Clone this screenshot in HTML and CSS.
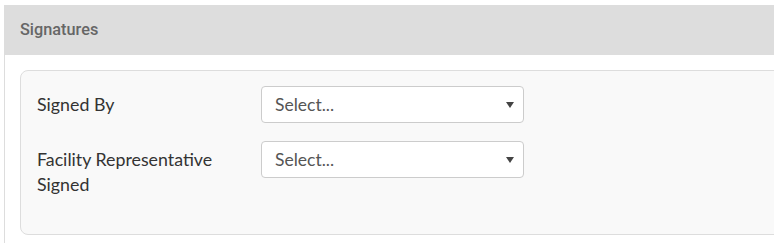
FILE: index.html
```html
<!DOCTYPE html>
<html>
<head>
<meta charset="utf-8">
<link rel="stylesheet" href="styles.css">
</head>
<body>
<div class="panel">
  <div class="panel-heading">Signatures</div>
  <div class="panel-body">
    <div class="box">
      <div class="row">
        <div class="label">Signed By</div>
        <div class="select"><span>Select...</span><span class="caret"></span></div>
      </div>
      <div class="row">
        <div class="label">Facility Representative<br>Signed</div>
        <div class="select"><span>Select...</span><span class="caret"></span></div>
      </div>
    </div>
  </div>
</div>
</body>
</html>
```

FILE: styles.css
```css
html, body {
  margin: 0;
  padding: 0;
  background: #ffffff;
  overflow: hidden;
  height: 243px;
}
.panel {
  margin: 5px 0 0 4px;
  width: 820px;
}
.panel-heading {
  background: #dddddd;
  height: 50px;
  line-height: 50px;
  padding-left: 16px;
  font-family: Roboto, "Liberation Sans", sans-serif;
  font-weight: 500;
  font-size: 16.3px;
  color: #666666;
}
.panel-body {
  border-left: 1px solid #dddddd;
  padding: 15px 0 0 15px;
  height: 180px;
}
.box {
  background: #f9f9f9;
  border: 1px solid #dddddd;
  border-radius: 8px;
  padding: 15px 0 19px 16px;
  font-family: Lato, "Liberation Sans", sans-serif;
  font-size: 17.5px;
}
.row {
  display: flex;
  align-items: flex-start;
  margin-bottom: 18px;
}
.label {
  width: 224px;
  padding-top: 6px;
  line-height: 25px;
  font-size: 17.8px;
  color: #333333;
}
.select {
  box-sizing: border-box;
  width: 263px;
  height: 37px;
  border: 1px solid #cccccc;
  border-radius: 4px;
  background: #ffffff;
  display: flex;
  align-items: center;
  justify-content: space-between;
  padding: 0 9px 0 13px;
  color: #555555;
}
.caret {
  width: 0;
  height: 0;
  border-left: 4px solid transparent;
  border-right: 4px solid transparent;
  border-top: 6px solid #444444;
}
```
